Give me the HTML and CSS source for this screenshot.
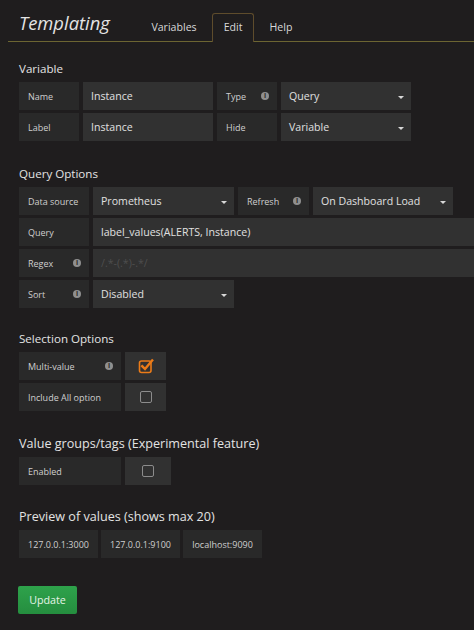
FILE: index.html
```html
<!DOCTYPE html>
<html lang="en">
<head>
<meta charset="utf-8">
<title>Templating</title>
<link rel="stylesheet" href="styles.css">
</head>
<body>
<div class="page">
  <div class="header">
    <h1 class="title">Templating</h1>
    <nav class="tabs">
      <span class="tab">Variables</span>
      <span class="tab active">Edit</span>
      <span class="tab">Help</span>
    </nav>
  </div>

  <div class="content">
    <section class="section first">
      <h2 class="heading">Variable</h2>
      <div class="rows">
        <div class="row">
          <div class="label w60">Name</div>
          <div class="input w130">Instance</div>
          <div class="label w60">Type <i class="info">i</i></div>
          <div class="input select w130">Query<b class="caret"></b></div>
        </div>
        <div class="row">
          <div class="label w60">Label</div>
          <div class="input w130">Instance</div>
          <div class="label w60">Hide</div>
          <div class="input select w130">Variable<b class="caret"></b></div>
        </div>
      </div>
    </section>

    <section class="section">
      <h2 class="heading">Query Options</h2>
      <div class="rows">
        <div class="row">
          <div class="label w70">Data source</div>
          <div class="input select w141">Prometheus<b class="caret"></b></div>
          <div class="label w71">Refresh <i class="info">i</i></div>
          <div class="input select w140">On Dashboard Load<b class="caret"></b></div>
        </div>
        <div class="row">
          <div class="label w70">Query</div>
          <div class="input wide">label_values(ALERTS, Instance)</div>
        </div>
        <div class="row">
          <div class="label w70">Regex <i class="info">i</i></div>
          <div class="input wide placeholder">/.*-(.*)-.*/</div>
        </div>
        <div class="row">
          <div class="label w70">Sort <i class="info">i</i></div>
          <div class="input select w141">Disabled<b class="caret"></b></div>
        </div>
      </div>
    </section>

    <section class="section tight">
      <h2 class="heading">Selection Options</h2>
      <div class="rows">
        <div class="row">
          <div class="label w102">Multi-value <i class="info">i</i></div>
          <div class="check w41">
            <svg width="16" height="16" viewBox="0 0 16 16">
              <rect x="1.5" y="3" width="11.5" height="11.5" rx="2" fill="none" stroke="#eb7b18" stroke-width="1.6"/>
              <path d="M4.2 8.2 L7 11 L14.2 2.4" fill="none" stroke="#eb7b18" stroke-width="2.4" stroke-linecap="square"/>
            </svg>
          </div>
        </div>
        <div class="row">
          <div class="label w102">Include All option</div>
          <div class="check w41"><span class="box"></span></div>
        </div>
      </div>
    </section>

    <section class="section">
      <h2 class="heading big">Value groups/tags (Experimental feature)</h2>
      <div class="rows">
        <div class="row">
          <div class="label w102">Enabled</div>
          <div class="check w46"><span class="box"></span></div>
        </div>
      </div>
    </section>

    <section class="section tight2">
      <h2 class="heading big">Preview of values (shows max 20)</h2>
      <div class="row chips">
        <span class="chip">127.0.0.1:3000</span>
        <span class="chip">127.0.0.1:9100</span>
        <span class="chip">localhost:9090</span>
      </div>
    </section>

    <div class="actions">
      <button class="btn">Update</button>
    </div>
  </div>
</div>
</body>
</html>
```

FILE: styles.css
```css
html, body {
  margin: 0;
  padding: 0;
  background: #1f1d1e;
  overflow: hidden;
}
body {
  font-family: "Open Sans", "Liberation Sans", sans-serif;
  color: #d8d9da;
  width: 474px;
  height: 630px;
}
.page {
  width: 474px;
}
.header {
  margin-left: 8px;
  height: 41px;
  border-bottom: 1px solid #6c6532;
  display: flex;
  align-items: flex-end;
  padding-left: 11px;
}
.title {
  margin: 0 0 5px 0;
  font-size: 18.4px;
  font-weight: 400;
  font-style: italic;
  line-height: 26px;
  color: #e4e4e4;
  align-self: flex-end;
}
.tabs {
  display: flex;
  margin-left: 30px;
  gap: 4px;
  margin-bottom: -1px;
}
.tab {
  display: block;
  font-size: 10.6px;
  line-height: 27px;
  height: 27px;
  padding: 0 10.5px;
  color: #d8d9da;
  border: 1px solid transparent;
  border-bottom: none;
  border-radius: 3px 3px 0 0;
}
.tab.active {
  border-color: #5e4c2c;
  background: #1f1d1e;
  height: 28px;
}
.content {
  padding-left: 19px;
}
.section {
  margin-top: 23px;
}
.section.first {
  margin-top: 17px;
}
.section.tight {
  margin-top: 21px;
}
.section.tight2 {
  margin-top: 22px;
}
.heading {
  margin: 0 0 3px 0;
  font-size: 11.6px;
  font-weight: 400;
  line-height: 20px;
  color: #e3e3e3;
}
.heading.big {
  font-size: 12.6px;
}
.rows {
  display: flex;
  flex-direction: column;
  gap: 3px;
}
.row {
  display: flex;
  gap: 4px;
  height: 28px;
}
.row > * {
  flex: none;
}
.label {
  box-sizing: border-box;
  height: 28px;
  background: #292929;
  font-size: 9px;
  color: #cfcfcf;
  display: flex;
  align-items: center;
  justify-content: space-between;
  padding: 0 8px 0 9px;
  white-space: nowrap;
}
.input {
  box-sizing: border-box;
  height: 28px;
  background: #313131;
  font-size: 10.6px;
  color: #e0e0e0;
  display: flex;
  align-items: center;
  padding: 0 8px;
  white-space: nowrap;
}
.input.placeholder {
  color: #4e4e4e;
}
.select {
  justify-content: space-between;
}
.caret {
  display: block;
  width: 0;
  height: 0;
  border-left: 3px solid transparent;
  border-right: 3px solid transparent;
  border-top: 3px solid #d8d8d8;
  margin-top: 3px;
  margin-right: -1px;
}
.info {
  display: inline-flex;
  align-items: center;
  justify-content: center;
  width: 8px;
  height: 8px;
  border-radius: 50%;
  background: #8f8f8f;
  color: #292929;
  font-size: 7px;
  font-style: normal;
  font-weight: 700;
  line-height: 8px;
  margin-right: 0;
}
.w60 { width: 60px; }
.w70 { width: 70px; }
.w71 { width: 71px; }
.w102 { width: 102px; }
.w130 { width: 130px; }
.w140 { width: 140px; }
.w141 { width: 141px; }
.w41 { width: 41px; }
.w46 { width: 46px; }
.wide { width: 400px; }
.check {
  box-sizing: border-box;
  height: 28px;
  background: #313131;
  display: flex;
  align-items: center;
  justify-content: center;
}
.box {
  display: block;
  box-sizing: border-box;
  width: 12px;
  height: 12px;
  border: 1.5px solid #8c8c8c;
  border-radius: 2px;
}
.chips {
  gap: 3px;
}
.chip {
  box-sizing: border-box;
  width: 79px;
  height: 28px;
  background: #292929;
  font-size: 9px;
  color: #cfcfcf;
  display: flex;
  align-items: center;
  justify-content: center;
}
.actions {
  margin-top: 28px;
  margin-left: -1px;
}
.btn {
  font-family: "Open Sans", "Liberation Sans", sans-serif;
  width: 59px;
  height: 28px;
  border: none;
  border-radius: 2px;
  background: linear-gradient(#2ea24b, #258e3f);
  color: #e6f4e8;
  font-size: 10.7px;
  padding: 0;
  cursor: pointer;
}
```
